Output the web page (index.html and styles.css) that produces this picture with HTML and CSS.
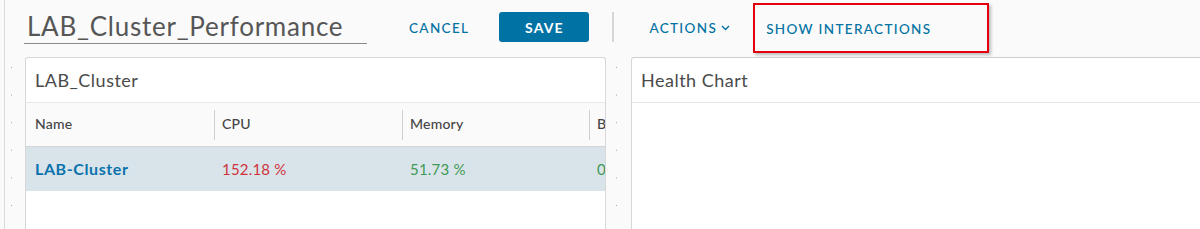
FILE: index.html
```html
<!DOCTYPE html>
<html lang="en">
<head>
<meta charset="utf-8">
<title>LAB_Cluster_Performance</title>
<link rel="stylesheet" href="styles.css">
</head>
<body>
<div class="page">
  <div class="main">
    <header class="toolbar">
      <div class="title">LAB_Cluster_Performance</div>
      <button class="btn-link cancel">CANCEL</button>
      <button class="btn-primary">SAVE</button>
      <div class="sep"></div>
      <button class="btn-link actions">ACTIONS<svg class="chev" width="9" height="6" viewBox="0 0 9 6"><polyline points="1,1 4.5,4.5 8,1" fill="none" stroke="#0072a3" stroke-width="1.4"/></svg></button>
      <div class="highlight"><button class="btn-link">SHOW INTERACTIONS</button></div>
    </header>
    <div class="board">
      <div class="gutter gutter-left"></div>
      <section class="card card-left">
        <div class="card-header">LAB_Cluster</div>
        <div class="grid-table">
          <div class="thead">
            <div class="th">Name</div>
            <div class="th">CPU</div>
            <div class="th">Memory</div>
            <div class="th">B</div>
          </div>
          <div class="trow selected">
            <div class="td name">LAB-Cluster</div>
            <div class="td bad">152.18 %</div>
            <div class="td good">51.73 %</div>
            <div class="td good">0</div>
          </div>
        </div>
      </section>
      <div class="gutter gutter-mid"></div>
      <section class="card card-right">
        <div class="card-header">Health Chart</div>
      </section>
    </div>
  </div>
</div>
</body>
</html>
```
FILE: styles.css
```css
html, body {
  margin: 0;
  padding: 0;
  height: 229px;
  overflow: hidden;
  background: #fafafa;
  font-family: Lato, "Open Sans", sans-serif;
  color: #4a4a4a;
}

.page {
  display: flex;
  height: 229px;
  padding-left: 4px;
  box-sizing: border-box;
}

.main {
  flex: 1;
  min-width: 0;
  border-left: 1px solid #dcdcdc;
  overflow: hidden;
  display: flex;
  flex-direction: column;
}

.toolbar {
  display: flex;
  align-items: center;
  height: 57px;
  box-sizing: border-box;
  padding: 0 0 3px 19px;
  flex: none;
}

.title {
  width: 343px;
  box-sizing: border-box;
  padding: 0 0 1px 3px;
  font-size: 26px;
  line-height: 31px;
  letter-spacing: 0.75px;
  color: #565656;
  border-bottom: 1px solid #8a8a8a;
}

button {
  font-family: inherit;
  border: 0;
  background: none;
  padding: 0;
  cursor: pointer;
}

.btn-link {
  color: #0072a3;
  font-size: 13.5px;
  letter-spacing: 0.1em;
  font-weight: 500;
  display: flex;
  align-items: center;
  height: 30px;
  padding-top: 1px;
  box-sizing: border-box;
}

.cancel {
  margin-left: 42px;
}

.btn-primary {
  margin-left: 30px;
  width: 90px;
  height: 30px;
  border-radius: 3px;
  background: #0072a3;
  color: #fff;
  font-weight: 700;
  font-size: 14px;
  letter-spacing: 0.08em;
}

.sep {
  margin-left: 23px;
  width: 2px;
  height: 30px;
  background: #d6d6d6;
}

.actions {
  margin-left: 35px;
}

.chev {
  margin-left: 4px;
  margin-top: 1px;
}

.highlight {
  margin-left: 23px;
  width: 236px;
  height: 50px;
  box-sizing: border-box;
  border: 2px solid #e4000f;
  box-shadow: 2px 2px 3px rgba(0, 0, 0, 0.25);
  padding-left: 11px;
  display: flex;
  align-items: center;
  align-self: flex-start;
  margin-top: 3px;
}

.board {
  display: flex;
  flex: 1;
  min-height: 0;
}

.gutter {
  flex: none;
  background-image: linear-gradient(to bottom, #a6a6a6 0, #a6a6a6 1px, transparent 1px);
  background-size: 1px 27.6px;
  background-repeat: repeat-y;
}

.gutter-left {
  width: 20px;
  background-position: 6px 10px;
}

.gutter-mid {
  width: 25px;
  background-position: 10px 10px;
}

.card {
  flex: none;
  background: #fff;
  border: 1px solid #d8d8d8;
  border-bottom: 0;
  border-radius: 3px 3px 0 0;
  box-sizing: border-box;
  overflow: hidden;
  height: 200px;
}

.card-left {
  width: 581px;
}

.card-right {
  width: 700px;
  border-top-color: #cfcfcf;
}

.card-header {
  height: 45px;
  box-sizing: border-box;
  border-bottom: 1px solid #e8e8e8;
  display: flex;
  align-items: center;
  padding: 0 0 1px 9px;
  font-size: 18px;
  letter-spacing: 0.5px;
  color: #4a4a4a;
}

.thead, .trow {
  display: grid;
  grid-template-columns: 188px 188px 187px 1fr;
  white-space: nowrap;
}

.thead {
  height: 44px;
  box-sizing: border-box;
  align-items: center;
  background: #fafafa;
  border-bottom: 1px solid #d4d4d4;
}

.th {
  height: 30px;
  box-sizing: border-box;
  line-height: 28px;
  padding-left: 7px;
  font-size: 14px;
  font-weight: 500;
  letter-spacing: 0.2px;
  color: #454545;
}

.th:first-child {
  padding-left: 9px;
}

.th + .th {
  border-left: 1px solid #cfcfcf;
}

.trow {
  height: 44px;
  box-sizing: border-box;
  padding-bottom: 1px;
  align-items: center;
}

.selected {
  background: #d9e4ea;
}

.td {
  padding-left: 8px;
  font-size: 15px;
  letter-spacing: 0.2px;
}

.td:first-child {
  padding-left: 9px;
}

.name {
  color: #0a72ad;
  font-weight: 700;
  font-size: 16px;
  letter-spacing: 0.6px;
}

.bad {
  color: #d0323a;
}

.good {
  color: #3f9a55;
}
```
